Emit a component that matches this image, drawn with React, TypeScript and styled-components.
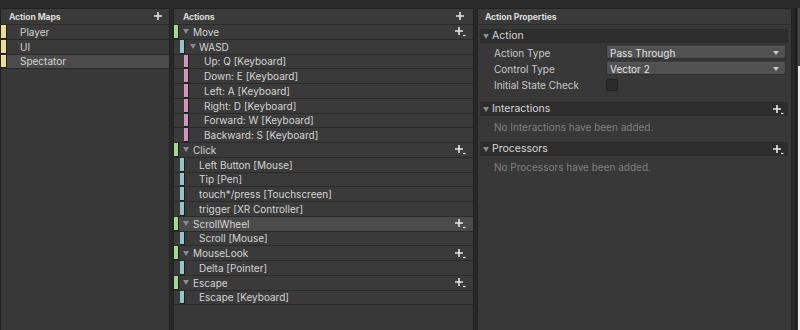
import React from 'react';
import styled, { createGlobalStyle } from 'styled-components';

const Global = createGlobalStyle`
  html, body { margin: 0; padding: 0; background: #2a2a2a; }
  body { font-family: Inter, "Noto Sans", sans-serif; -webkit-font-smoothing: antialiased; }
`;

const Screen = styled.div`
  width: 800px;
  height: 330px;
  display: flex;
  flex-direction: column;
  background: #282828;
  overflow: hidden;
`;

const TopStrip = styled.div`
  height: 8px;
  flex-shrink: 0;
  background: #2b2b2b;
`;

const Main = styled.div`
  flex: 1;
  display: flex;
  gap: 3px;
  min-height: 0;
`;

const Panel = styled.div<{ $w: number }>`
  width: ${p => p.$w}px;
  flex-shrink: 0;
  box-sizing: border-box;
  background: #383838;
  border: 1px solid #222;
  border-bottom: none;
  display: flex;
  flex-direction: column;
`;

const PanelHeader = styled.div<{ $pl: number; $pr: number }>`
  height: 16px;
  flex-shrink: 0;
  box-sizing: border-box;
  display: flex;
  align-items: center;
  justify-content: space-between;
  padding: 0 ${p => p.$pr}px 0 ${p => p.$pl}px;
  border-bottom: 1px solid #2c2c2c;
  background: #3a3a3a;
  font-size: 8.6px;
  font-weight: 700;
  color: #dadada;
  letter-spacing: -0.1px;
`;

const List = styled.div`
  display: flex;
  flex-direction: column;
`;

const Row = styled.div<{ $selected?: boolean }>`
  height: 14.75px;
  box-sizing: border-box;
  display: flex;
  align-items: stretch;
  border-bottom: 1px solid #2a2a2a;
  background: ${p => (p.$selected ? '#4b4b4b' : '#3a3a3a')};
  font-size: 10px;
  color: #d4d4d4;
  padding-right: 7px;
`;

const Bar = styled.div<{ $color: string; $indent: number; $w?: number }>`
  width: ${p => p.$w ?? 5}px;
  flex-shrink: 0;
  box-sizing: border-box;
  margin-left: ${p => p.$indent}px;
  background: ${p => p.$color};
  border-right: 1px solid #1d1d1d;
  border-bottom: 1px solid #1d1d1d;
`;

const Arrow = styled.span<{ $ml: number }>`
  align-self: center;
  margin-left: ${p => p.$ml}px;
  width: 0;
  height: 0;
  border-left: 3.5px solid transparent;
  border-right: 3.5px solid transparent;
  border-top: 5px solid #8a8a8a;
`;

const Label = styled.span<{ $ml: number }>`
  align-self: center;
  margin-left: ${p => p.$ml}px;
  flex: 1;
  white-space: nowrap;
  line-height: 1;
`;

const IconWrap = styled.span`
  align-self: center;
  display: flex;
`;

const PlusIcon: React.FC<{ drop?: boolean }> = ({ drop }) => (
  <svg width="12" height="11" viewBox="0 0 12 11">
    <path d="M5 1 V9 M1 5 H9" stroke="#e6e6e6" strokeWidth="1.6" fill="none" />
    {drop && <path d="M9 9.5 H11.5" stroke="#e6e6e6" strokeWidth="1.2" />}
  </svg>
);

/* Right panel */
const RightBody = styled.div`
  display: flex;
  flex-direction: column;
  padding: 0 3px 0 2px;
`;

const Foldout = styled.div<{ $mt: number }>`
  height: 14px;
  margin-top: ${p => p.$mt}px;
  background: #2d2d2d;
  display: flex;
  align-items: center;
  padding: 0 4px 0 3px;
  font-size: 10.5px;
  color: #d6d6d6;
`;

const FoldTitle = styled.span`
  flex: 1;
  margin-left: 3px;
  line-height: 1;
`;

const PropRow = styled.div<{ $mt: number; $h: number }>`
  height: ${p => p.$h}px;
  margin-top: ${p => p.$mt}px;
  display: grid;
  grid-template-columns: 112px 1fr;
  align-items: center;
  padding-left: 14px;
  padding-right: 2px;
  font-size: 10px;
  color: #c8c8c8;
`;

const Dropdown = styled.div`
  height: 13px;
  box-sizing: border-box;
  background: #515151;
  border: 1px solid #2f2f2f;
  border-top-color: #5a5a5a;
  border-radius: 3px;
  display: flex;
  align-items: center;
  justify-content: space-between;
  padding: 0 6px 0 3px;
  font-size: 10px;
  color: #e2e2e2;
`;

const DropArrow = styled.span`
  width: 0;
  height: 0;
  border-left: 3.5px solid transparent;
  border-right: 3.5px solid transparent;
  border-top: 4px solid #c8c8c8;
`;

const Checkbox = styled.div`
  width: 12px;
  height: 12px;
  box-sizing: border-box;
  background: #2b2b2b;
  border: 1px solid #222;
  border-radius: 2px;
`;

const Message = styled.div`
  height: 22px;
  display: flex;
  align-items: center;
  padding-left: 14px;
  font-size: 10px;
  color: #7f7f7f;
`;

const EdgeStrip = styled.div`
  width: 8px;
  flex-shrink: 0;
  display: flex;
  border-left: 2px solid #1e1e1e;
  box-sizing: border-box;
`;

const EdgeInner = styled.div`
  flex: 1;
  display: flex;
  flex-direction: column;
  border-left: 1px solid #333;
`;

const EdgeTop = styled.div`
  height: 58px;
  background: #464646;
`;

const EdgeBottom = styled.div`
  flex: 1;
  background: #ececec;
`;

const COLORS = {
  map: '#eedd8e',
  action: '#a8d68f',
  binding: '#94c3cb',
  part: '#d396ba',
};

type Item =
  | { kind: 'action'; text: string; selected?: boolean }
  | { kind: 'composite'; text: string }
  | { kind: 'part'; text: string }
  | { kind: 'binding'; text: string };

const actions: Item[] = [
  { kind: 'action', text: 'Move' },
  { kind: 'composite', text: 'WASD' },
  { kind: 'part', text: 'Up: Q [Keyboard]' },
  { kind: 'part', text: 'Down: E [Keyboard]' },
  { kind: 'part', text: 'Left: A [Keyboard]' },
  { kind: 'part', text: 'Right: D [Keyboard]' },
  { kind: 'part', text: 'Forward: W [Keyboard]' },
  { kind: 'part', text: 'Backward: S [Keyboard]' },
  { kind: 'action', text: 'Click' },
  { kind: 'binding', text: 'Left Button [Mouse]' },
  { kind: 'binding', text: 'Tip [Pen]' },
  { kind: 'binding', text: 'touch*/press [Touchscreen]' },
  { kind: 'binding', text: 'trigger [XR Controller]' },
  { kind: 'action', text: 'ScrollWheel', selected: true },
  { kind: 'binding', text: 'Scroll [Mouse]' },
  { kind: 'action', text: 'MouseLook' },
  { kind: 'binding', text: 'Delta [Pointer]' },
  { kind: 'action', text: 'Escape' },
  { kind: 'binding', text: 'Escape [Keyboard]' },
];

const ActionRow: React.FC<{ item: Item }> = ({ item }) => {
  switch (item.kind) {
    case 'action':
      return (
        <Row $selected={item.selected}>
          <Bar $color={COLORS.action} $indent={0} />
          <Arrow $ml={4} />
          <Label $ml={4}>{item.text}</Label>
          <IconWrap>
            <PlusIcon drop />
          </IconWrap>
        </Row>
      );
    case 'composite':
      return (
        <Row>
          <Bar $color={COLORS.binding} $indent={6} />
          <Arrow $ml={5} />
          <Label $ml={3}>{item.text}</Label>
        </Row>
      );
    case 'part':
      return (
        <Row>
          <Bar $color={COLORS.part} $indent={10} />
          <Label $ml={15}>{item.text}</Label>
        </Row>
      );
    case 'binding':
      return (
        <Row>
          <Bar $color={COLORS.binding} $indent={6} />
          <Label $ml={14}>{item.text}</Label>
        </Row>
      );
  }
};

const maps = ['Player', 'UI', 'Spectator'];

export default function App() {
  return (
    <Screen>
      <Global />
      <TopStrip />
      <Main>
        <Panel $w={170}>
          <PanelHeader $pl={8} $pr={4}>
            <span>Action Maps</span>
            <PlusIcon />
          </PanelHeader>
          <List>
            {maps.map(m => (
              <Row key={m} $selected={m === 'Spectator'}>
                <Bar $color={COLORS.map} $indent={0} $w={6} />
                <Label $ml={13}>{m}</Label>
              </Row>
            ))}
          </List>
        </Panel>
        <Panel $w={301}>
          <PanelHeader $pl={9} $pr={6}>
            <span>Actions</span>
            <PlusIcon />
          </PanelHeader>
          <List>
            {actions.map((a, i) => (
              <ActionRow key={i} item={a} />
            ))}
          </List>
        </Panel>
        <Panel $w={315}>
          <PanelHeader $pl={7} $pr={6}>
            <span>Action Properties</span>
          </PanelHeader>
          <RightBody>
            <Foldout $mt={4}>
              <Arrow $ml={0} />
              <FoldTitle>Action</FoldTitle>
            </Foldout>
            <PropRow $mt={3} $h={13}>
              <span>Action Type</span>
              <Dropdown>
                <span>Pass Through</span>
                <DropArrow />
              </Dropdown>
            </PropRow>
            <PropRow $mt={3} $h={13}>
              <span>Control Type</span>
              <Dropdown>
                <span>Vector 2</span>
                <DropArrow />
              </Dropdown>
            </PropRow>
            <PropRow $mt={4} $h={12}>
              <span>Initial State Check</span>
              <Checkbox />
            </PropRow>
            <Foldout $mt={11}>
              <Arrow $ml={0} />
              <FoldTitle>Interactions</FoldTitle>
              <PlusIcon drop />
            </Foldout>
            <Message>No Interactions have been added.</Message>
            <Foldout $mt={4}>
              <Arrow $ml={0} />
              <FoldTitle>Processors</FoldTitle>
              <PlusIcon drop />
            </Foldout>
            <Message>No Processors have been added.</Message>
          </RightBody>
        </Panel>
        <EdgeStrip>
          <EdgeInner>
            <EdgeTop />
            <EdgeBottom />
          </EdgeInner>
        </EdgeStrip>
      </Main>
    </Screen>
  );
}
